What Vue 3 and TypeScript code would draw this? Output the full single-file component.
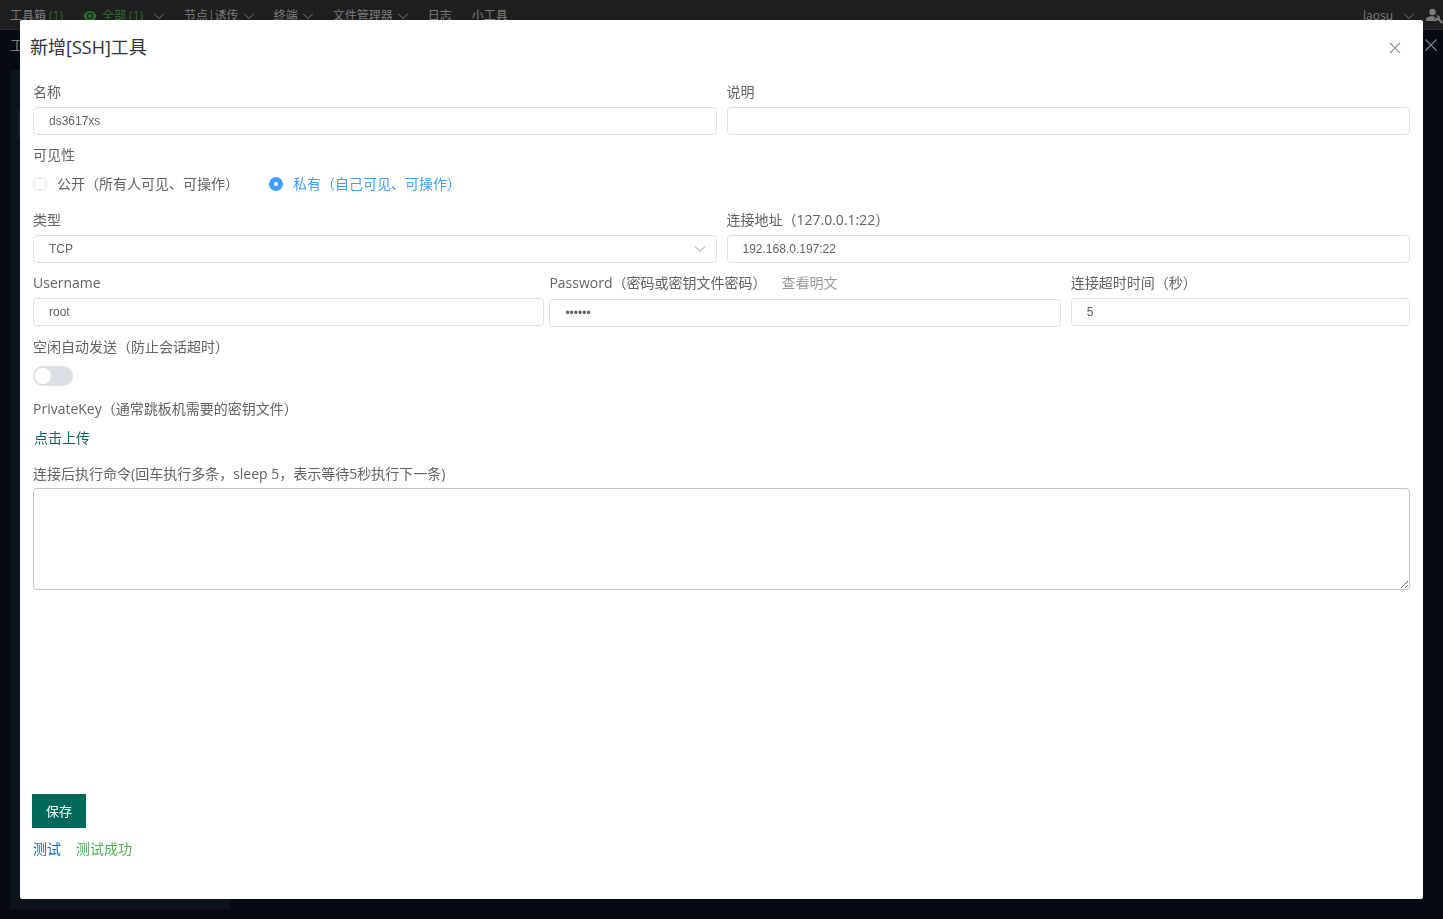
<script setup lang="ts">
import { ref } from 'vue'

interface MenuItem {
  text: string
  count?: string
  eye?: boolean
  arrow?: boolean
}

const menu: MenuItem[] = [
  { text: '工具箱', count: '(1)' },
  { text: '全部 (1)', eye: true, arrow: true },
  { text: '节点|诱传', arrow: true },
  { text: '终端', arrow: true },
  { text: '文件管理器', arrow: true },
  { text: '日志' },
  { text: '小工具' },
]

const name = ref('ds3617xs')
const description = ref('')
const visibility = ref('private')
const connectionType = ref('TCP')
const address = ref('192.168.0.197:22')
const username = ref('root')
const password = ref('secret')
const showPassword = ref(false)
const timeout = ref('5')
const keepAlive = ref(false)
const commands = ref('')
</script>

<template>
  <div class="page">
    <header class="topbar">
      <nav class="menu">
        <a v-for="item in menu" :key="item.text" href="#" class="menu-item" :class="{ green: item.eye }">
          <svg v-if="item.eye" class="eye" viewBox="0 0 14 12" width="14" height="12" aria-hidden="true">
            <path fill="currentColor" fill-rule="evenodd" d="M7 1C3.9 1 1.4 3 .4 6c1 3 3.500 5 6.600 5s5.600-2 6.600-5C12.600 3 10.100 1 7 1Zm0 8.300A3.300 3.300 0 1 1 7 2.700a3.300 3.300 0 0 1 0 6.600ZM7 4a2 2 0 1 0 0 4 2 2 0 0 0 0-4Z" />
          </svg>
          <span>{{ item.text }}</span>
          <span v-if="item.count" class="count">{{ item.count }}</span>
          <svg v-if="item.arrow" class="arrow" viewBox="1 0 10 12" width="10" height="12" aria-hidden="true">
            <path d="M1 3.500 6 8.500 11 3.500" fill="none" stroke="currentColor" />
          </svg>
        </a>
      </nav>
      <div class="account">
        <a href="#" class="menu-item user">
          <span>laosu</span>
          <svg class="arrow" viewBox="1 0 10 12" width="10" height="12" aria-hidden="true">
            <path d="M1 3.500 6 8.500 11 3.500" fill="none" stroke="currentColor" />
          </svg>
        </a>
        <svg viewBox="0 0 17 16" width="17" height="16" aria-hidden="true">
          <g fill="currentColor">
            <circle cx="6.500" cy="4" r="3.200" />
            <path d="M0 13V11.500c0-2.200 3-3.200 6.500-3.200.6 0 1.100 0 1.600.1 0 2 1.100 3.600 2.900 4.300V13Z" />
            <path d="M16.900 13.900 13.700 10.700c.4-1 .1-2-.6-2.700-.8-.8-2-.9-2.900-.5l1.700 1.700-1.200 1.200L9 8.700c-.5.9-.3 2.100.5 2.900.7.700 1.800.9 2.700.6l3.200 3.200c.2.200.4.200.6 0l.9-.9c.2-.2.2-.4 0-.6Z" />
          </g>
        </svg>
      </div>
    </header>
    <div class="subhead">
      <span>工</span>
      <svg viewBox="0 0 14 14" width="14" height="14" aria-hidden="true">
        <path d="m1.500 1.500 11 11m0-11-11 11" fill="none" stroke="currentColor" stroke-width="1.400" />
      </svg>
    </div>
    <aside class="side"><div class="side-card"></div></aside>

    <div class="overlay">
      <section class="dialog" role="dialog" aria-labelledby="dialog-title">
        <div class="dialog-head">
          <h1 id="dialog-title">新增[SSH]工具</h1>
          <button type="button" class="close" aria-label="关闭">
            <svg viewBox="0 0 12 12" width="12" height="12" aria-hidden="true">
              <path d="m1 1 10 10M11 1 1 11" fill="none" stroke="currentColor" stroke-width="1.200" />
            </svg>
          </button>
        </div>

        <form class="form" @submit.prevent>
          <div class="row">
            <div class="field">
              <label for="name">名称</label>
              <input id="name" v-model="name" class="box" type="text" />
            </div>
            <div class="field">
              <label for="description">说明</label>
              <input id="description" v-model="description" class="box" type="text" />
            </div>
          </div>

          <fieldset class="field visibility">
            <legend>可见性</legend>
            <div class="radios">
              <label class="radio"><input v-model="visibility" type="radio" name="visibility" value="public" /><span>公开（所有人可见、可操作）</span></label>
              <label class="radio"><input v-model="visibility" type="radio" name="visibility" value="private" /><span>私有（自己可见、可操作）</span></label>
            </div>
          </fieldset>

          <div class="row">
            <div class="field">
              <label for="type">类型</label>
              <div class="select">
                <select id="type" v-model="connectionType" class="box">
                  <option>TCP</option>
                </select>
                <svg viewBox="0 0 12 12" width="12" height="12" aria-hidden="true">
                  <path d="M1 3.500 6 8.500 11 3.500" fill="none" stroke="currentColor" stroke-width="1.200" />
                </svg>
              </div>
            </div>
            <div class="field">
              <label for="address">连接地址（127.0.0.1:22）</label>
              <input id="address" v-model="address" class="box" type="text" />
            </div>
          </div>

          <div class="credentials">
            <div class="field account-field">
              <label for="username">Username</label>
              <input id="username" v-model="username" class="box" type="text" />
            </div>
            <div class="field account-field">
              <div class="label-line">
                <label for="password">Password（密码或密钥文件密码）</label>
                <button type="button" class="text-button reveal" @click="showPassword = !showPassword">查看明文</button>
              </div>
              <input id="password" v-model="password" class="box" :type="showPassword ? 'text' : 'password'" />
            </div>
            <div class="field timeout">
              <label for="timeout">连接超时时间（秒）</label>
              <input id="timeout" v-model="timeout" class="box" type="text" />
            </div>
          </div>

          <div class="field keepalive">
            <label for="keepalive">空闲自动发送（防止会话超时）</label>
            <input id="keepalive" v-model="keepAlive" class="switch" type="checkbox" role="switch" />
          </div>

          <div class="field key">
            <span>PrivateKey（通常跳板机需要的密钥文件）</span>
            <button type="button" class="text-button upload">点击上传</button>
          </div>

          <div class="field commands">
            <label for="commands">连接后执行命令(回车执行多条，sleep 5，表示等待5秒执行下一条)</label>
            <textarea id="commands" v-model="commands"></textarea>
          </div>

          <div class="actions">
            <button type="submit" class="save">保存</button>
            <div class="test-line">
              <button type="button" class="text-button test">测试</button>
              <span class="success">测试成功</span>
            </div>
          </div>
        </form>
      </section>
    </div>
  </div>
</template>

<style>
body {
  margin: 0;
  background: #060b13;
}
</style>

<style scoped>
* {
  box-sizing: border-box;
}

.page {
  display: flex;
  flex-direction: column;
  min-height: 100vh;
  padding-bottom: 10px;
  background: #060b13;
  color: #606266;
  font: 14px/20px "Open Sans", "Noto Sans CJK SC", sans-serif;
}

.topbar {
  display: flex;
  justify-content: space-between;
  height: 30px;
  padding: 2px 0 0 10px;
  border-bottom: 1px solid #2b2b2b;
  background: #1e1e1e;
  color: #7d7d7d;
  font-size: 12px;
}

.menu,
.account,
.menu-item {
  display: flex;
  align-items: center;
}

.menu {
  gap: 20px;
}

.account {
  gap: 12px;
}

.menu-item {
  gap: 5px;
  color: inherit;
  text-decoration: none;
}

.menu-item.green,
.count {
  color: #2a702d;
}

.count {
  margin-left: -2px;
}

.menu-item .arrow {
  color: #7d7d7d;
}

.green .arrow,
.user .arrow {
  margin-left: 6px;
}

.subhead {
  display: flex;
  align-items: center;
  justify-content: space-between;
  height: 30px;
  padding: 0 5px 0 10px;
  color: #7d7d7d;
}

.side {
  flex: 1;
  width: 220px;
  margin: 10px 0 0 10px;
  padding: 40px 8px;
  background: #0d151b;
}

.side-card {
  height: 28px;
  background: #192126;
}

.overlay {
  position: fixed;
  inset: 0;
  display: flex;
  padding: 20px;
  overflow: auto;
}

.dialog {
  display: flex;
  flex: 1;
  flex-direction: column;
  border-radius: 2px;
  background: #fff;
}

.dialog-head {
  display: flex;
  align-items: center;
  justify-content: space-between;
  padding: 15px 20px 0 10px;
}

h1 {
  margin: 0;
  color: #303133;
  font-size: 18px;
  font-weight: 400;
  line-height: 24px;
}

button {
  border: 0;
  background: none;
  font: inherit;
  cursor: pointer;
}

.close {
  display: flex;
  padding: 4px 2px 2px;
  color: #909399;
}

.form {
  display: flex;
  flex: 1;
  flex-direction: column;
  padding: 23px 13px 40px;
}

.row {
  display: flex;
  gap: 10px;
}

.row .field {
  flex: 1 1 0;
}

.field {
  display: flex;
  flex-direction: column;
  gap: 5px;
  min-width: 0;
}

.box {
  width: 100%;
  height: 28px;
  padding: 0 15px;
  border: 1px solid #dcdfe6;
  border-radius: 4px;
  outline: 0;
  background: #fff;
  color: #606266;
  font: 12px "Liberation Sans", sans-serif;
}

.visibility {
  display: block;
  margin: 10px 0 16px;
  padding: 0;
  border: 0;
}

legend {
  padding: 0;
}

.radios {
  display: flex;
  gap: 30px;
  padding-top: 9px;
}

.radio {
  display: flex;
  align-items: center;
  gap: 10px;
}

.radio input {
  width: 14px;
  height: 14px;
  margin: 0;
  border: 1px solid #dcdfe6;
  border-radius: 50%;
  background: #fff;
  appearance: none;
}

.radio input:checked {
  border: 5px solid #409eff;
}

.radio:has(:checked) {
  color: #409eff;
}

.select {
  position: relative;
}

select.box {
  display: block;
  appearance: none;
}

.select svg {
  position: absolute;
  top: 8px;
  right: 11px;
  color: #c0c4cc;
  pointer-events: none;
}

.credentials {
  display: grid;
  grid-template-columns: 3fr 3fr 2fr;
  margin-top: 10px;
}

.account-field {
  padding-right: 5px;
}

.timeout {
  padding-left: 5px;
}

.label-line {
  display: flex;
  gap: 15px;
  padding-bottom: 1px;
}

.text-button {
  align-self: flex-start;
  padding: 0;
}

.reveal {
  color: #999;
}

.keepalive {
  gap: 9px;
  margin-top: 10px;
}

.switch {
  display: flex;
  align-items: center;
  width: 40px;
  height: 20px;
  margin: 0;
  padding: 2px;
  border-radius: 10px;
  background: #dcdfe6;
  appearance: none;
}

.switch::before {
  width: 16px;
  height: 16px;
  border-radius: 50%;
  background: #fff;
  content: "";
}

.switch:checked {
  justify-content: flex-end;
  background: #409eff;
}

.key {
  gap: 9px;
  margin-top: 13px;
}

.upload {
  padding: 0 1px;
  color: #00695c;
}

.commands {
  gap: 4px;
  margin-top: 16px;
}

textarea {
  width: 100%;
  height: 102px;
  padding: 5px 15px;
  border: 1px solid #c0c4cc;
  border-radius: 4px;
  outline: 0;
  color: #606266;
  font: inherit;
  resize: vertical;
}

.actions {
  margin-top: auto;
}

.save {
  display: block;
  height: 34px;
  margin: 0 0 11px -1px;
  padding: 0 14px;
  background: #00695c;
  color: #fff;
  font-size: 13px;
}

.test-line {
  display: flex;
  gap: 15px;
}

.test {
  color: #1565c0;
}

.success {
  color: #4caf50;
}
</style>
